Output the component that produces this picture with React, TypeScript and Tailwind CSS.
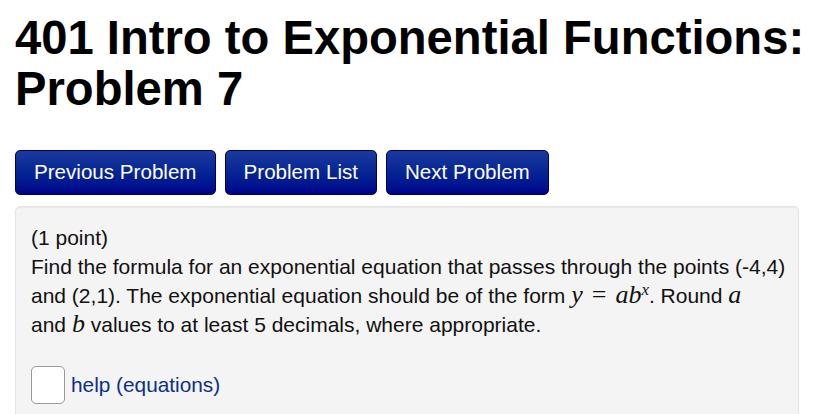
import type { ReactNode } from 'react';

const navButtons = ['Previous Problem', 'Problem List', 'Next Problem'];

function NavButton({ children }: { children: ReactNode }) {
  return (
    <button className="h-[45px] rounded-[5px] border border-[#00005e] bg-gradient-to-b from-[#1a3a9e] to-[#00008a] px-[18px] text-[20.6px] text-white">
      {children}
    </button>
  );
}

function M({ children }: { children: ReactNode }) {
  return <span className="font-['Liberation_Serif',serif] text-[26px] italic leading-none">{children}</span>;
}

export default function App() {
  return (
    <div className="min-h-screen bg-white px-[15px] font-['Liberation_Sans',Arial,sans-serif] text-[#111]">
      <h1 className="pt-[12px] text-[47.2px] font-bold leading-[51px] text-black">
        401 Intro to Exponential Functions: Problem 7
      </h1>
      <div className="mt-[36px] flex gap-[9px]">
        {navButtons.map(label => (
          <NavButton key={label}>{label}</NavButton>
        ))}
      </div>
      <div className="mt-[11px] mr-[16px] rounded-[5px] border border-[#e3e3e3] bg-[#f4f4f4] pl-[15px] pr-[8px] pt-[16px] pb-[20px] shadow-[inset_0_1px_1px_rgba(0,0,0,0.05)]">
        <div className="whitespace-nowrap text-[21px] leading-[29px]">
          <div>(1 point)</div>
          <div>
            Find the formula for an exponential equation that passes through the points (-4,4)
            <br />
            and (2,1). The exponential equation should be of the form <M>y</M>
            <span className="mx-[9px] font-['Liberation_Serif',serif] text-[26px] leading-none">=</span>
            <M>ab</M>
            <sup className="font-['Liberation_Serif',serif] text-[17px] italic">x</sup>. Round <M>a</M>
            <br />
            and <M>b</M> values to at least 5 decimals, where appropriate.
          </div>
        </div>
        <div className="mt-[27px] flex items-center gap-[6px]">
          <input className="h-[38px] w-[34px] rounded-[5px] border border-[#999] bg-white" type="text" aria-label="answer" />
          <a className="text-[20.8px] text-[#0b2f8f]" href="#">help (equations)</a>
        </div>
      </div>
    </div>
  );
}
